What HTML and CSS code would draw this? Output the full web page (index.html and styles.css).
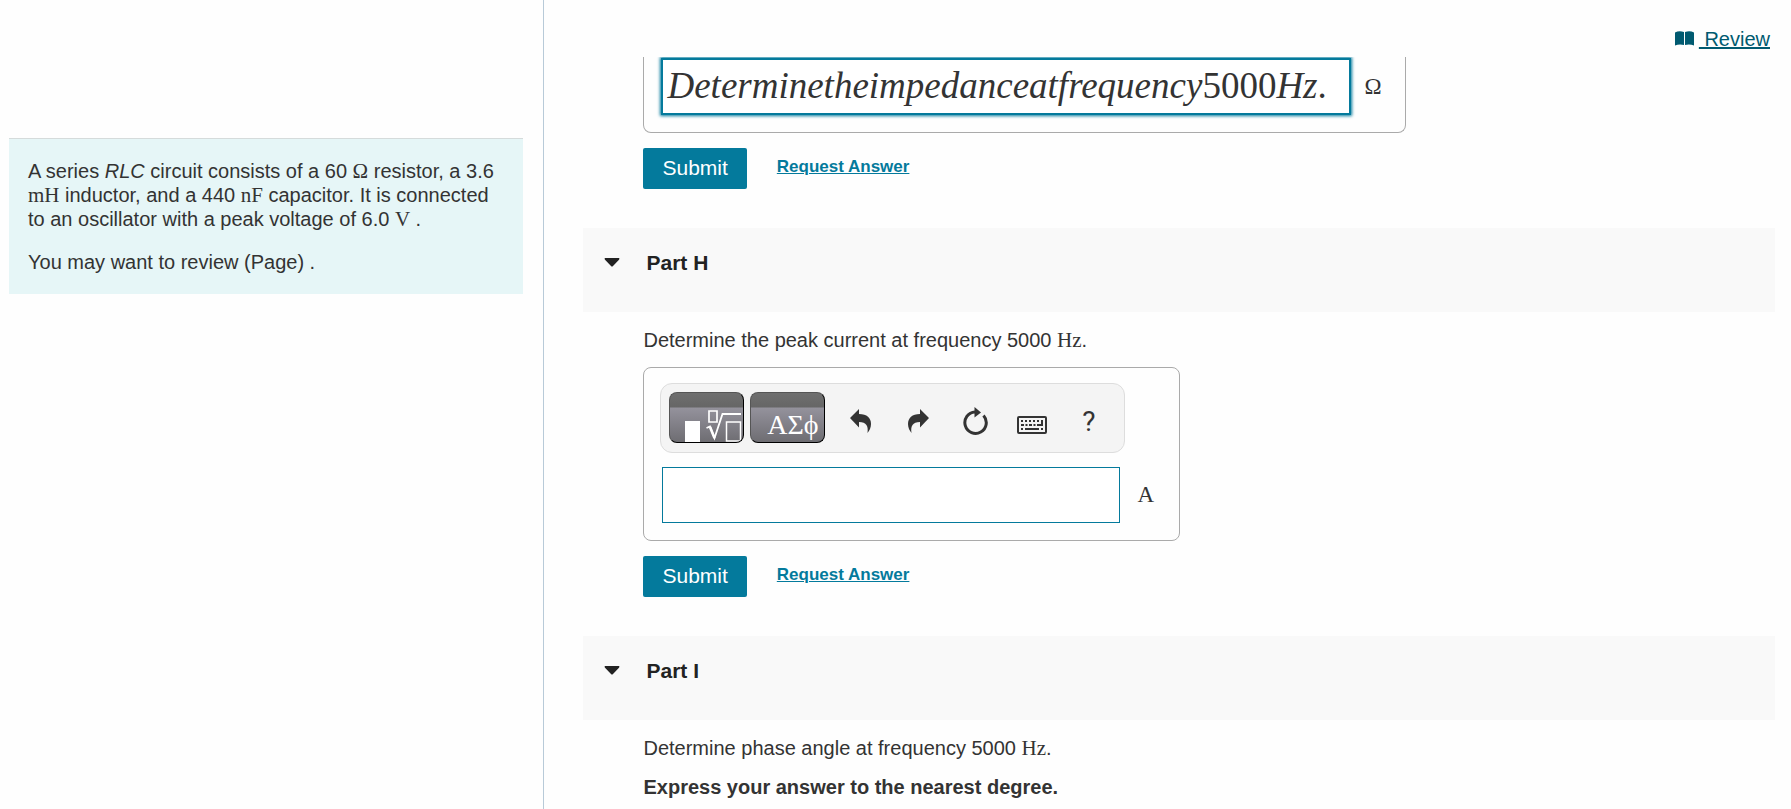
FILE: index.html
```html
<!DOCTYPE html>
<html lang="en">
<head>
<meta charset="utf-8">
<meta name="viewport" content="width=device-width, initial-scale=1">
<title>RLC circuit</title>
<link rel="stylesheet" href="styles.css">
</head>
<body>
<div class="layout">
  <aside class="problem">
    <div class="problem-box">
      <p>A series <i>RLC</i> circuit consists of a 60 <span class="math">Ω</span> resistor, a 3.6 <span class="math">mH</span> inductor, and a 440 <span class="math">nF</span> capacitor. It is connected to an oscillator with a peak voltage of 6.0 <span class="math">V</span> .</p>
      <p>You may want to review (Page) .</p>
    </div>
  </aside>
  <main class="content">
    <div class="topbar">
      <a class="review" href="#review"><svg class="book" viewBox="0 0 19 15" width="19" height="15" aria-hidden="true"><path d="M0 1.500Q4 -.5 9 1V14Q4 13 0 14.500ZM10 1Q15 -.5 19 1.500V14.500Q15 13 10 14Z" fill="#005a70"/></svg><span class="review-label">&nbsp;Review</span></a>
    </div>
    <div class="scroll">
      <section class="answer-area">
        <div class="card card-cut">
          <div class="answer-row">
            <div class="field field-focus" role="textbox" aria-label="Impedance" contenteditable="true" spellcheck="false"><i>Determinetheimpedanceatfrequency</i>5000<i>Hz</i>.</div>
            <span class="unit">Ω</span>
          </div>
        </div>
        <div class="actions">
          <button class="submit" type="button">Submit</button>
          <a class="request" href="#answer-g">Request Answer</a>
        </div>
      </section>

      <header class="part-head">
        <svg class="caret" viewBox="0 0 16 9" width="16" height="9" aria-hidden="true"><path d="M1 0H15Q16 .8 15 1.800L9 8Q8 9 7 8L1 1.800Q0 .8 1 0Z" fill="#222"/></svg>
        <h2>Part H</h2>
      </header>
      <section class="answer-area">
        <p class="question"><label for="current">Determine the peak current at frequency 5000 <span class="math">Hz</span>.</label></p>
        <div class="card">
          <div class="toolbar">
            <button class="palette" type="button" aria-label="Templates">
              <svg viewBox="0 0 73 49" width="73" height="49" aria-hidden="true"><path d="M15 28H30V49H15Z" fill="#fff"/><g fill="none" stroke="#fff"><path d="M39 18H47V29H39Z" stroke-width="1.700"/><path d="M36.500 35L40 33.500L44.500 45L52.500 21H71" stroke-width="1.800"/><path d="M56.500 29H70.500V48H56.500Z" stroke-width="1.500"/><path d="M40 34L44.500 45" stroke-width="2.600"/></g></svg>
            </button>
            <button class="palette symbols" type="button">ΑΣϕ</button>
            <button class="tool" type="button" aria-label="Undo"><svg viewBox="0 0 22 24" width="22" height="24" aria-hidden="true"><path d="M0 9L9 0V5C17 5 21 9 21 15C21 18.500 19.500 21.500 17.500 24C18.500 17 16.500 13 9 13V18.500Z" fill="#333"/></svg></button>
            <button class="tool" type="button" aria-label="Redo"><svg viewBox="0 0 22 24" width="22" height="24" aria-hidden="true"><path d="M22 9L13 0V5C5 5 1 9 1 15C1 18.500 2.500 21.500 4.500 24C3.500 17 5.500 13 13 13V18.500Z" fill="#333"/></svg></button>
            <button class="tool tool-high" type="button" aria-label="Reset"><svg viewBox="0 0 26 28" width="26" height="28" aria-hidden="true"><path d="M21.500 8.500A10.700 10.700 0 1 1 13 5" fill="none" stroke="#333" stroke-width="3"/><path d="M12.500 0L19 5.500L12.500 10.500Z" fill="#333"/></svg></button>
            <button class="tool tool-low" type="button" aria-label="Keyboard shortcuts"><svg viewBox="0 0 30 18" width="30" height="18" aria-hidden="true"><rect x="1" y="1" width="28" height="16" rx="1" fill="none" stroke="#333" stroke-width="2"/><path d="M4 5H24" stroke="#333" stroke-width="2" stroke-dasharray="2 2"/><path d="M4 9H22" stroke="#333" stroke-width="2" stroke-dasharray="3 1.500 2 1.500"/><path d="M4 13H6M8 13H22M24 13H26M25 4V10M22 9H26" fill="none" stroke="#333" stroke-width="2"/></svg></button>
            <button class="tool help" type="button" aria-label="Help">?</button>
          </div>
          <div class="answer-row">
            <input class="field" id="current" type="text">
            <span class="unit">A</span>
          </div>
        </div>
        <div class="actions">
          <button class="submit" type="button">Submit</button>
          <a class="request" href="#answer-h">Request Answer</a>
        </div>
      </section>

      <header class="part-head">
        <svg class="caret" viewBox="0 0 16 9" width="16" height="9" aria-hidden="true"><path d="M1 0H15Q16 .8 15 1.800L9 8Q8 9 7 8L1 1.800Q0 .8 1 0Z" fill="#222"/></svg>
        <h2>Part I</h2>
      </header>
      <section class="answer-area">
        <p class="question">Determine phase angle at frequency 5000 <span class="math">Hz</span>.</p>
        <p class="instruction">Express your answer to the nearest degree.</p>
      </section>
    </div>
  </main>
</div>
</body>
</html>
```
FILE: styles.css
```css
* { box-sizing: border-box; }
body {
  margin: 0;
  font: 20px/24px "Liberation Sans", Arial, sans-serif;
  color: #333;
  background: #fefefe;
}
p, h2 { margin: 0; }
button, input { font: inherit; color: inherit; margin: 0; }

.layout { display: flex; height: 100vh; overflow: hidden; }

.problem {
  flex: 0 0 30.4%;
  padding: 138px 20px 0 9px;
  border-right: 1px solid #b8cad8;
}
.problem-box {
  display: grid;
  gap: 19px;
  padding: 20px 15px 20px 19px;
  background: #e6f6f7;
  border-top: 1px solid #d5dbdb;
}
.math { font: 21px/20px "Liberation Serif", "Times New Roman", serif; }

.content { flex: 1; min-width: 0; display: flex; flex-direction: column; }
.topbar {
  flex: none;
  display: flex;
  justify-content: flex-end;
  height: 57px;
  padding: 27px 21px 0 0;
}
.review { display: flex; gap: 5px; color: #005a70; text-decoration: none; }
.review-label { text-decoration: underline; }
.book { margin-top: 4px; }

.scroll { flex: 1; min-height: 0; overflow: hidden; padding: 0 16px 0 39px; }
.answer-area { padding-left: 60px; }

.card {
  width: fit-content;
  border: 1px solid #aaa;
  border-radius: 8px;
  padding: 15px 16px 17px;
}
.card-cut { border-top: 0; border-radius: 0 0 8px 8px; padding-top: 1px; }
.answer-row { display: flex; align-items: center; gap: 17px; padding: 0 9px 0 2px; }
.card-cut .answer-row { gap: 13px; padding: 0 7px 0 1px; }
.field {
  width: 458px;
  height: 56px;
  padding: 0 5px;
  border: 1px solid #047a9c;
  border-radius: 0;
  background: #fff;
  outline: none;
}
.field-focus {
  width: auto;
  min-width: 690px;
  height: 57px;
  padding: 0 4px;
  border-width: 2px;
  box-shadow: 0 0 3px 1px #047a9c;
  font: 37px/52px "Liberation Serif", "Times New Roman", serif;
  white-space: nowrap;
}
.unit {
  min-width: 16px;
  font: 23px/24px "Liberation Serif", "Times New Roman", serif;
}

.actions { display: flex; align-items: flex-start; gap: 30px; padding: 15px 0 39px; }
.submit {
  height: 41px;
  padding: 0 19px 2px;
  border: 0;
  border-radius: 2px;
  background: #047a9c;
  color: #fff;
  font-size: 21px;
}
.request {
  padding-top: 7px;
  font-size: 17px;
  font-weight: bold;
  color: #047a9c;
}

.part-head {
  display: flex;
  align-items: flex-start;
  gap: 26px;
  height: 84px;
  padding: 23px 21px;
  background: #f9f9f9;
}
.part-head h2 { font-size: 21px; line-height: 24px; color: #222; }
.caret { margin-top: 7px; }

.question { padding: 16px 0 15px; }
.instruction { font-weight: bold; }

.toolbar {
  display: flex;
  align-items: flex-start;
  gap: 6px;
  width: fit-content;
  height: 70px;
  margin-bottom: 14px;
  padding: 8px 10px 8px 8px;
  border: 1px solid #ddd;
  border-radius: 12px;
  background: #f4f4f4;
}
.palette {
  width: 75px;
  height: 51px;
  padding: 0;
  border: 1px solid;
  border-color: #555 #000 #000 #555;
  border-radius: 8px;
  background: linear-gradient(#6f6f6f, #666 14px, #94929c 15px, #6e6d72);
  overflow: hidden;
}
.palette svg { display: block; }
.symbols {
  margin-right: 4px;
  padding: 14px 0 0 10px;
  color: #fff;
  font: 28px/32px "Liberation Serif", serif;
}
.tool {
  display: flex;
  justify-content: center;
  width: 51px;
  height: 50px;
  padding: 17px 0 0;
  border: 0;
  background: none;
}
.tool-high { padding-top: 15px; }
.tool-low { padding-top: 24px; }
.help { font-size: 28px; font-family: Roboto, sans-serif; line-height: 26px; }
```
